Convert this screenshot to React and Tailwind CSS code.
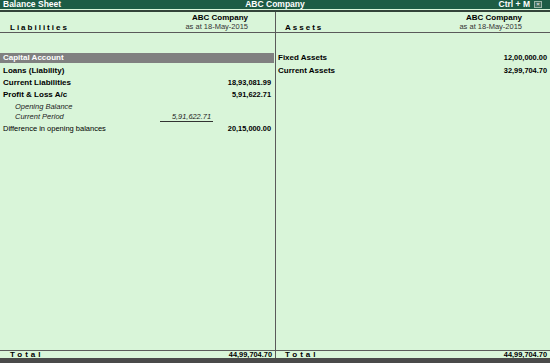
import React from 'react';

const font = { fontFamily: '"Liberation Sans", Arial, sans-serif' };

const Amount = ({ children, className = '' }) => (
  <span className={`text-[7.4px] font-bold ${className}`}>{children}</span>
);

const App = () => {
  return (
    <div className="w-[550px] h-[363px] bg-[#d9f5d9] flex flex-col overflow-hidden text-black" style={font}>
      {/* title bar */}
      <div className="h-[9px] bg-[#1d5c45] grid grid-cols-[1fr_auto_1fr] items-center text-white font-bold text-[8.5px] leading-[9px] px-[3px]">
        <span>Balance Sheet</span>
        <span>ABC Company</span>
        <div className="flex items-center justify-end gap-[4px] pr-[5px]">
          <span>Ctrl + M</span>
          <span className="w-[8px] h-[7px] border border-[#9bb5a8] bg-[#3f6e5a] text-[6px] leading-[5px] text-center text-[#e0e0e0]">×</span>
        </div>
      </div>
      <div className="h-[1px] bg-[#d9f5d9]" />
      <div className="h-[2px] bg-[#33443a]" />

      {/* main */}
      <div className="flex-1 flex">
        {/* liabilities */}
        <div className="w-[276px] flex flex-col border-r border-[#5a5a5a]">
          <div className="h-[21px] border-b border-[#5a5a5a] flex items-end justify-between pl-[10px] pr-[27px]">
            <span className="text-[8px] font-bold tracking-[2px] leading-[10px] -mb-[1px]">Liabilities</span>
            <div className="flex flex-col items-end leading-[9px] mb-[1px]">
              <span className="text-[8px] font-bold">ABC Company</span>
              <span className="text-[7.5px] text-[#333]">as at 18-May-2015</span>
            </div>
          </div>
          <div className="pt-[20px] flex flex-col">
            <div className="h-[10px] bg-[#808080] text-white text-[8px] font-bold leading-[10px] px-[3px] mr-[1px]">Capital Account</div>
            <div className="h-[12px] mt-[2px] flex items-center justify-between px-[3px] text-[8px] font-bold">
              <span>Loans (Liability)</span>
            </div>
            <div className="h-[12px] flex items-center justify-between pl-[3px] pr-[4px] text-[8px] font-bold">
              <span>Current Liabilities</span>
              <Amount>18,93,081.99</Amount>
            </div>
            <div className="h-[12px] flex items-center justify-between pl-[3px] pr-[4px] text-[8px] font-bold">
              <span>Profit &amp; Loss A/c</span>
              <Amount>5,91,622.71</Amount>
            </div>
            <div className="h-[10.5px] flex items-center pl-[15px] text-[7.5px] italic text-[#222]">
              <span>Opening Balance</span>
            </div>
            <div className="h-[10.5px] flex items-center pl-[15px] text-[7.5px] italic text-[#222]">
              <span className="w-[145px]">Current Period</span>
              <span className="w-[53px] text-right pr-[2px] border-b border-[#333] leading-[9px] text-[7.4px]">5,91,622.71</span>
            </div>
            <div className="h-[13px] flex items-center justify-between pl-[3px] pr-[4px]">
              <span className="text-[7.5px]">Difference in opening balances</span>
              <Amount>20,15,000.00</Amount>
            </div>
          </div>
        </div>

        {/* assets */}
        <div className="flex-1 flex flex-col">
          <div className="h-[21px] border-b border-[#5a5a5a] flex items-end justify-between pl-[9px] pr-[28px]">
            <span className="text-[8px] font-bold tracking-[2px] leading-[10px] -mb-[1px]">Assets</span>
            <div className="flex flex-col items-end leading-[9px] mb-[1px]">
              <span className="text-[8px] font-bold">ABC Company</span>
              <span className="text-[7.5px] text-[#333]">as at 18-May-2015</span>
            </div>
          </div>
          <div className="pt-[20px] flex flex-col">
            <div className="h-[10px] flex items-center justify-between pl-[2px] pr-[3px] text-[8px] font-bold">
              <span>Fixed Assets</span>
              <Amount>12,00,000.00</Amount>
            </div>
            <div className="h-[12px] mt-[2px] flex items-center justify-between pl-[2px] pr-[3px] text-[8px] font-bold">
              <span>Current Assets</span>
              <Amount>32,99,704.70</Amount>
            </div>
          </div>
        </div>
      </div>

      {/* total */}
      <div className="h-[8px] border-t border-[#5a5a5a] flex text-[8px] font-bold leading-[7px]">
        <div className="w-[276px] border-r border-[#5a5a5a] flex justify-between pl-[10px] pr-[3px]">
          <span className="tracking-[3px]">Total</span>
          <Amount className="leading-[7px]">44,99,704.70</Amount>
        </div>
        <div className="flex-1 flex justify-between pl-[9px] pr-[3px]">
          <span className="tracking-[3px]">Total</span>
          <Amount className="leading-[7px]">44,99,704.70</Amount>
        </div>
      </div>
      <div className="h-[5px] bg-[#4a4a4a]" />
    </div>
  );
};

export default App;
